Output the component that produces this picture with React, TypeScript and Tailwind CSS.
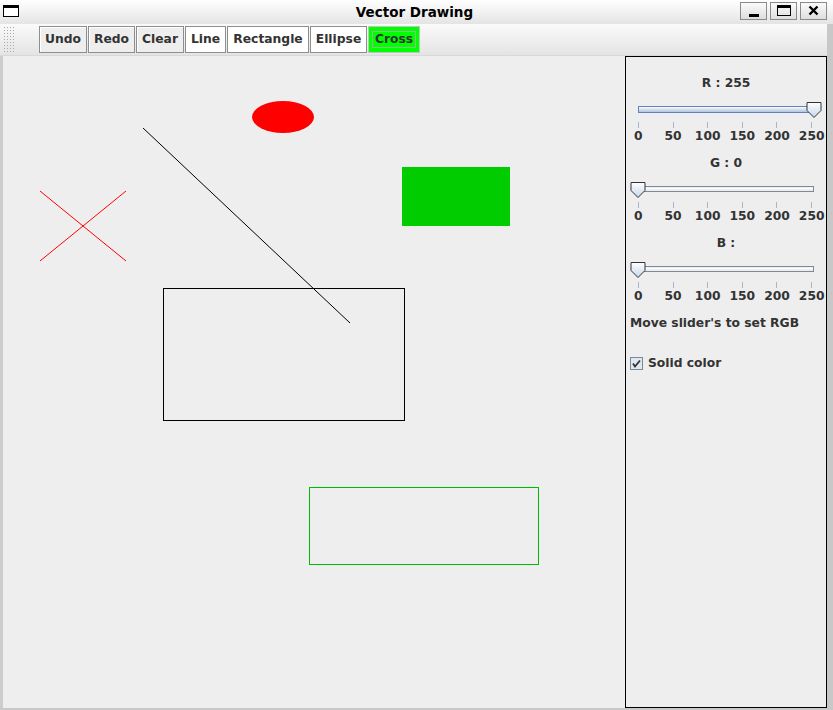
import React from "react";

const font = { fontFamily: '"DejaVu Sans", "Liberation Sans", sans-serif' };

const tools = [
  { label: "Undo", w: "w-[48px]", kind: "gray" },
  { label: "Redo", w: "w-[47px]", kind: "gray" },
  { label: "Clear", w: "w-[48px]", kind: "gray" },
  { label: "Line", w: "w-[41px]", kind: "white" },
  { label: "Rectangle", w: "w-[82px]", kind: "white" },
  { label: "Ellipse", w: "w-[57px]", kind: "white" },
  { label: "Cross", w: "w-[52px]", kind: "active" },
];

const ticks = [0, 50, 100, 150, 200, 250];

function WinButton({ children }: { children: React.ReactNode }) {
  return (
    <div className="w-[27px] h-[18px] border border-[#8a8a8a] bg-gradient-to-b from-[#fbfbfb] to-[#dedede] flex items-center justify-center">
      {children}
    </div>
  );
}

function ToolButton({ label, w, kind }: { label: string; w: string; kind: string }) {
  if (kind === "active") {
    return (
      <div className={`${w} h-[27px] bg-[#00ff00] border border-[#b9c9b9] flex items-center justify-center`}>
        <span className="px-[2px] leading-[15px] border border-[#8fb98f] text-[#333333]">{label}</span>
      </div>
    );
  }
  return (
    <div
      className={`${w} h-[27px] border border-[#8e8e8e] shadow-[inset_1px_1px_0_#ffffff] flex items-center justify-center text-[#333333] ${
        kind === "gray" ? "bg-[#eeeeee]" : "bg-white"
      }`}
    >
      {label}
    </div>
  );
}

function Slider({ value }: { value: number }) {
  const x0 = 12;
  const x1 = 188;
  const c = x0 + ((x1 - x0) * value) / 255;
  const tickXs = ticks.map((t) => Math.round(x0 + (173 * t) / 250) + 0.5);
  return (
    <svg width="200" height="37" className="block">
      <defs>
        <linearGradient id={`fill${value}`} x1="0" y1="0" x2="0" y2="1">
          <stop offset="0" stopColor="#ffffff" />
          <stop offset="1" stopColor="#a9c0dc" />
        </linearGradient>
        <linearGradient id={`thumb${value}`} x1="0" y1="0" x2="0" y2="1">
          <stop offset="0" stopColor="#ffffff" />
          <stop offset="1" stopColor="#c4d6ea" />
        </linearGradient>
      </defs>
      {value > 0 ? (
        <rect x={x0 + 0.5} y="15.5" width={x1 - x0 - 1} height="6" fill={`url(#fill${value})`} stroke="#6382bf" />
      ) : (
        <>
          <rect x={x0 + 0.5} y="15.5" width={x1 - x0 - 1} height="5" fill="#eeeeee" stroke="#7a8a99" />
          <line x1={x0 + 1} y1="17.5" x2={x1 - 1} y2="17.5" stroke="#ffffff" />
        </>
      )}
      <path
        d={`M${c - 7} 11.5 H${c + 7} V19.5 L${c} 26.5 L${c - 7} 19.5 Z`}
        fill={`url(#thumb${value})`}
        stroke="#333333"
      />
      {tickXs.map((x) => (
        <line key={x} x1={x} y1="31" x2={x} y2="37" stroke="#a3b8cc" />
      ))}
    </svg>
  );
}

function SliderGroup({ label, value }: { label: string; value: number }) {
  return (
    <div className="h-[80px] flex flex-col">
      <div className="h-[16px] leading-[16px] text-center">{label}</div>
      <Slider value={value} />
      <div className="grid grid-cols-6 w-[208px] ml-[-5px] mt-[1px] h-[15px] leading-[15px]">
        {ticks.map((t) => (
          <span key={t} className="text-center">
            {t}
          </span>
        ))}
      </div>
    </div>
  );
}

export default function App() {
  return (
    <div className="w-[833px] h-[710px] flex flex-col bg-[#c8c8c8] overflow-hidden text-[12.3px] font-bold text-[#333333]" style={font}>
      {/* title bar */}
      <div className="h-[24px] flex items-center bg-gradient-to-b from-white to-[#e4e4e4]">
        <svg width="16" height="12" className="ml-[3px] mt-[-2px]">
          <rect x="0.5" y="0.5" width="15" height="11" fill="#ffffff" stroke="#000" />
          <rect x="0" y="0" width="16" height="3" fill="#000" />
        </svg>
        <div className="flex-1 text-center text-[13.5px] text-black font-bold pl-[70px]">Vector Drawing</div>
        <div className="flex gap-[3px] mr-[6px] mt-[-3px]">
          <WinButton>
            <div className="w-[10px] h-[3px] bg-black mt-[9px]" />
          </WinButton>
          <WinButton>
            <div className="w-[14px] h-[11px] border border-black border-t-[3px]" />
          </WinButton>
          <WinButton>
            <svg width="11" height="11">
              <path d="M1.5 1.5 L9.5 9.5 M9.5 1.5 L1.5 9.5" stroke="#000" strokeWidth="2.4" />
            </svg>
          </WinButton>
        </div>
      </div>

      <div className="flex-1 flex">
        <div className="flex-1 flex flex-col">
          {/* toolbar */}
          <div className="h-[32px] flex bg-gradient-to-b from-[#fafafa] to-[#e4e4e4] border-b border-[#d8d8d8]">
            <svg width="12" height="26" className="ml-[4px] mt-[3px]">
              <defs>
                <pattern id="grip" width="3" height="3" patternUnits="userSpaceOnUse">
                  <rect x="0" y="0" width="1" height="1" fill="#a8a8a8" />
                </pattern>
              </defs>
              <rect width="12" height="26" fill="url(#grip)" />
            </svg>
            <div className="flex gap-[1px] ml-[23px] mt-[2px]">
              {tools.map((t) => (
                <ToolButton key={t.label} {...t} />
              ))}
            </div>
          </div>

          {/* main */}
          <div className="flex-1 flex">
            <div className="w-[3px] bg-[#cccccc]" />
            <div className="flex-1 bg-[#eeeeee]">
              <svg width="622" height="652" className="block">
                <ellipse cx="280" cy="61" rx="31" ry="16" fill="#ff0000" />
                <line x1="140" y1="72" x2="347" y2="267" stroke="#000" />
                <rect x="399" y="111" width="108" height="59" fill="#00cc00" />
                <line x1="37" y1="135" x2="123" y2="205" stroke="#ff0000" />
                <line x1="37" y1="205" x2="123" y2="135" stroke="#ff0000" />
                <rect x="160.5" y="232.5" width="241" height="132" fill="none" stroke="#000" />
                <rect x="306.5" y="431.5" width="229" height="77" fill="none" stroke="#00bb00" />
              </svg>
            </div>
            <div className="w-[202px] border border-black bg-[#eeeeee] pt-[18px] flex flex-col">
              <SliderGroup label="R : 255" value={255} />
              <SliderGroup label="G : 0" value={0} />
              <SliderGroup label="B :" value={0} />
              <div className="h-[16px] leading-[16px] pl-[4px]">Move slider's to set RGB</div>
              <div className="h-[16px] mt-[24px] flex items-center pl-[4px] gap-[5px]">
                <svg width="13" height="13">
                  <rect x="0.5" y="0.5" width="12" height="12" fill="#dfe7f0" stroke="#7a8a99" />
                  <path d="M3 6.5 L5 9.5 L10 3.5" fill="none" stroke="#333" strokeWidth="1.8" />
                </svg>
                <span>Solid color</span>
              </div>
            </div>
          </div>
        </div>
        <div className="w-[6px]" />
      </div>
      <div className="h-[2px]" />
    </div>
  );
}
